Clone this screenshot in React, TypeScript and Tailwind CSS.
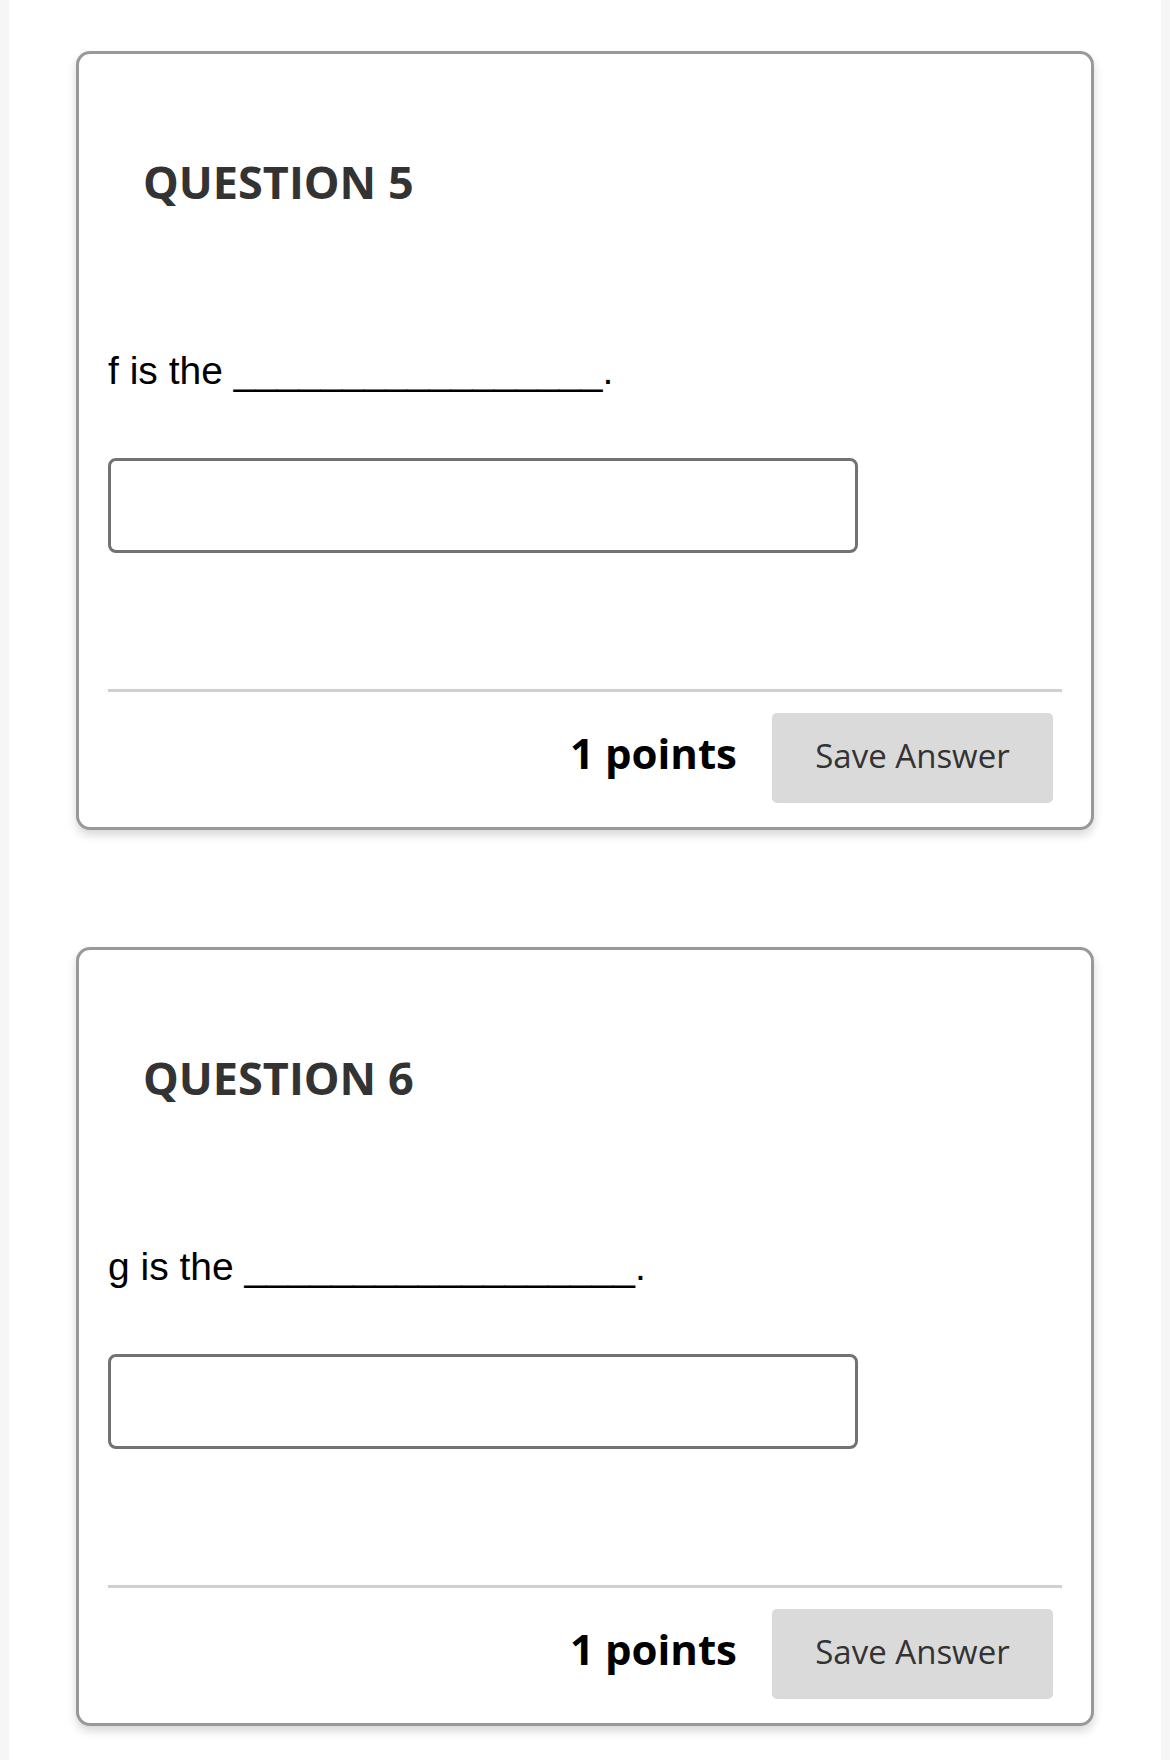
import React from 'react';

const questions = [
  { num: 5, prompt: 'f is the', blanks: 17 },
  { num: 6, prompt: 'g is the', blanks: 18 },
];

function QuestionCard({ num, prompt, blanks }: { num: number; prompt: string; blanks: number }) {
  return (
    <div className="rounded-[14px] border-[3px] border-[#999999] bg-white px-[29px] pt-[98px] pb-[24px] shadow-[0_5px_10px_rgba(0,0,0,0.16)]">
      <h2 className="pl-[35px] font-['Open_Sans',sans-serif] text-[45px] font-bold leading-[60px] text-[#333333]">
        QUESTION {num}
      </h2>

      <p className="mt-[135px] font-['Liberation_Sans',Arial,sans-serif] text-[39px] leading-[48px] text-black">
        {prompt} {'_'.repeat(blanks)}.
      </p>

      <input
        type="text"
        className="mt-[63px] block h-[95px] w-[750px] rounded-[8px] border-[3px] border-[#727272] bg-white outline-none"
      />

      <div className="mt-[136px] h-[3px] bg-[#d0d0d0]" />

      <div className="mt-[21px] flex items-center justify-end pr-[9px]">
        <span className="mr-[35px] mb-[10px] font-['Open_Sans',sans-serif] text-[42px] font-bold leading-none text-black">
          1 points
        </span>
        <button className="flex h-[90px] w-[281px] items-center justify-center rounded-[5px] bg-[#dadada] pb-[5px] font-['Open_Sans',sans-serif] text-[33px] text-[#333333]">
          Save Answer
        </button>
      </div>
    </div>
  );
}

export default function App() {
  return (
    <div className="flex min-h-[1760px] justify-center bg-[#f6f6f6]">
      <div className="flex w-[1152px] flex-col gap-[117px] bg-white px-[67px] pt-[51px] pb-[36px]">
        {questions.map(q => (
          <QuestionCard key={q.num} {...q} />
        ))}
      </div>
    </div>
  );
}
